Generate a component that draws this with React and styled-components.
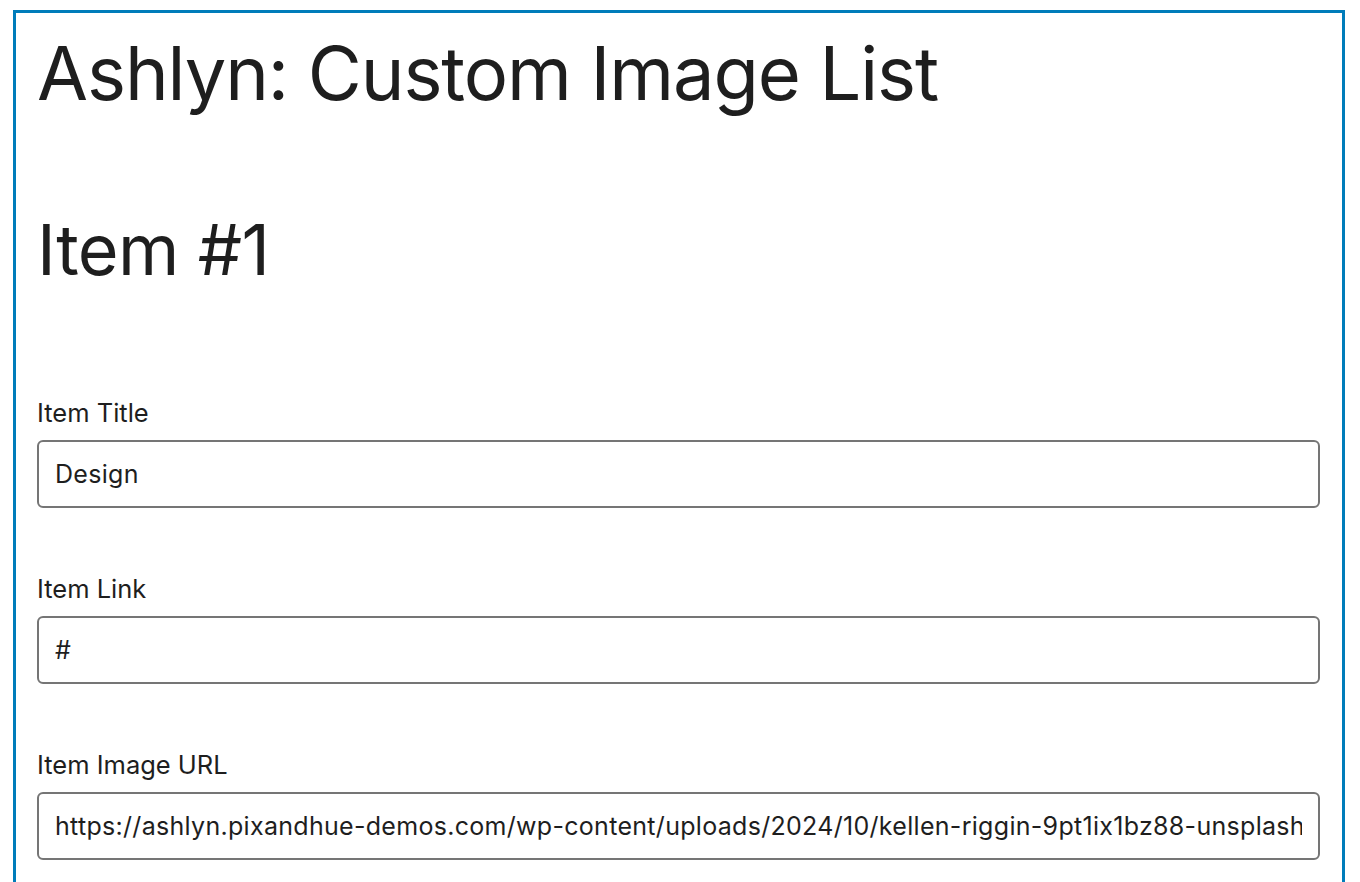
import React from "react";
import styled, { createGlobalStyle } from "styled-components";

const GlobalStyle = createGlobalStyle`
  html, body {
    margin: 0;
    padding: 0;
    background: #ffffff;
    overflow: hidden;
  }
  body {
    font-family: Inter, "Liberation Sans", sans-serif;
    color: #1e1e1e;
  }
`;

const fields = [
  { label: "Item Title", value: "Design" },
  { label: "Item Link", value: "#" },
  {
    label: "Item Image URL",
    value:
      "https://ashlyn.pixandhue-demos.com/wp-content/uploads/2024/10/kellen-riggin-9pt1ix1bz88-unsplash.jpg",
  },
];

export default function App() {
  return (
    <Page>
      <GlobalStyle />
      <Block>
        <Title>Ashlyn: Custom Image List</Title>
        <ItemHeading>Item #1</ItemHeading>
        {fields.map((f) => (
          <Field key={f.label}>
            <Label>{f.label}</Label>
            <Input type="text" defaultValue={f.value} readOnly />
          </Field>
        ))}
      </Block>
    </Page>
  );
}

const Page = styled.div`
  padding: 10px 15px 0 13px;
  height: 882px;
  box-sizing: border-box;
`;

const Block = styled.section`
  border: 3px solid #007cba;
  border-bottom: none;
  padding: 12px 22px 40px 21px;
  min-height: 900px;
  box-sizing: border-box;
`;

const Title = styled.h1`
  margin: 0;
  font-size: 74px;
  font-weight: 400;
  line-height: 96px;
  letter-spacing: -1.1px;
`;

const ItemHeading = styled.h2`
  margin: 87px 0 0;
  font-size: 70px;
  font-weight: 400;
  line-height: 84px;
  letter-spacing: -0.6px;
`;

const Field = styled.div`
  display: flex;
  flex-direction: column;
  margin-top: 65px;

  &:first-of-type {
    margin-top: 105px;
  }
`;

const Label = styled.label`
  font-size: 25.5px;
  line-height: 32px;
  margin-bottom: 11px;
`;

const Input = styled.input`
  height: 68px;
  box-sizing: border-box;
  border: 2px solid #757575;
  border-radius: 6px;
  padding: 0 16px;
  font-family: Inter, "Liberation Sans", sans-serif;
  font-size: 25px;
  letter-spacing: 0.3px;
  color: #1e1e1e;
  background: #ffffff;
  outline: none;
`;
